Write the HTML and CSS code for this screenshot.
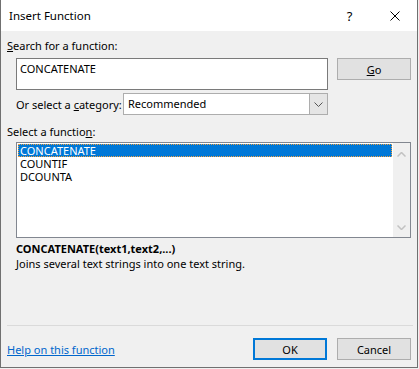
FILE: index.html
```html
<!DOCTYPE html>
<html>
    <head>
        <title>Insert Function</title>
        <link rel="stylesheet" href="styles.css">
    </head>
    <body>
        <div class="dialog">
            <div class="titlebar">
                <span class="title">Insert Function</span>
                <span class="caption-btn">?</span>
                <span class="caption-btn">
                    <svg width="10" height="10" viewBox="0 0 10 10"><path d="M0.5 0.5L9.5 9.5M9.5 0.5L0.5 9.5" stroke="#000" stroke-width="1"/></svg>
                </span>
            </div>
            <div class="content">
                <div class="label"><u>S</u>earch for a function:</div>
                <div class="search-row">
                    <div class="search-box">CONCATENATE</div>
                    <button class="btn"><u>G</u>o</button>
                </div>
                <div class="category-row">
                    <span class="category-label">Or select a <u>c</u>ategory:</span>
                    <div class="select">
                        <span class="select-value">Recommended</span>
                        <span class="select-arrow">
                            <svg width="9" height="5" viewBox="0 0 9 5"><path d="M0.5 0.5L4.5 4.5L8.5 0.5" fill="none" stroke="#555" stroke-width="1"/></svg>
                        </span>
                    </div>
                </div>
                <div class="label label-list">Select a functio<u>n</u>:</div>
                <div class="listbox">
                    <ul class="items">
                        <li class="selected">CONCATENATE</li>
                        <li>COUNTIF</li>
                        <li>DCOUNTA</li>
                    </ul>
                    <div class="scrollbar">
                        <svg width="9" height="5" viewBox="0 0 9 5"><path d="M0.5 4.5L4.5 0.5L8.5 4.5" fill="none" stroke="#c2c2c2" stroke-width="1.5"/></svg>
                        <svg width="9" height="5" viewBox="0 0 9 5"><path d="M0.5 0.5L4.5 4.5L8.5 0.5" fill="none" stroke="#c2c2c2" stroke-width="1.5"/></svg>
                    </div>
                </div>
                <div class="signature">CONCATENATE(text1,text2,...)</div>
                <div class="desc">Joins several text strings into one text string.</div>
                <div class="spacer"></div>
                <div class="separator"></div>
                <div class="footer">
                    <a href="#" class="help-link">Help on this function</a>
                    <div class="footer-buttons">
                        <button class="btn btn-default">OK</button>
                        <button class="btn">Cancel</button>
                    </div>
                </div>
            </div>
        </div>
    </body>
</html>
```

FILE: styles.css
```css
body {
    margin: 0;
    background: #f0f0f0;
    font-family: "Noto Sans", "Segoe UI", sans-serif;
    font-size: 11px;
    color: #000;
}

* {
    box-sizing: border-box;
}

.dialog {
    width: 418px;
    height: 368px;
    border: 1px solid #707070;
    border-top: none;
    background: #f0f0f0;
    display: flex;
    flex-direction: column;
}

.titlebar {
    flex: none;
    height: 31px;
    background: #fff;
    display: flex;
    align-items: center;
    padding-left: 8px;
}

.title {
    flex: 1;
    font-size: 11.5px;
}

.caption-btn {
    width: 45px;
    height: 31px;
    display: flex;
    align-items: center;
    justify-content: center;
    font-size: 13px;
}

.content {
    flex: 1;
    display: flex;
    flex-direction: column;
    padding: 0 6px 7px 6px;
}

.label {
    line-height: 15px;
    margin-top: 7px;
    white-space: nowrap;
}

.label-list {
    margin-top: 9px;
}

.search-row {
    display: flex;
    gap: 9px;
    margin: 5px 0 0 9px;
    align-items: flex-start;
}

.search-box {
    width: 312px;
    height: 32px;
    border: 1px solid #7a7a7a;
    background: #fff;
    padding: 2px 3px;
    line-height: 15px;
}

.btn {
    width: 74px;
    height: 22px;
    padding: 0;
    border: 1px solid #adadad;
    background: #e1e1e1;
    font: inherit;
    color: #000;
}

.btn-default {
    border: 2px solid #0078d7;
}

.category-row {
    width: 312px;
    margin: 3px 0 0 9px;
    display: flex;
    justify-content: space-between;
    align-items: center;
}

.category-label {
    white-space: nowrap;
}

.select {
    width: 205px;
    height: 22px;
    display: flex;
    border: 1px solid #adadad;
    background: #fff;
}

.select-value {
    flex: 1;
    padding-left: 4px;
    line-height: 20px;
}

.select-arrow {
    width: 18px;
    background: #e5e5e5;
    border-left: 1px solid #adadad;
    display: flex;
    align-items: center;
    justify-content: center;
}

.listbox {
    margin: 3px 0 0 9px;
    height: 96px;
    border: 1px solid #828790;
    background: #fff;
    display: flex;
}

.items {
    flex: 1;
    list-style: none;
    margin: 0;
    padding: 1px;
}

.items li {
    height: 13px;
    line-height: 13px;
    padding-left: 2px;
}

.items .selected {
    background: #0078d7;
    color: #fff;
    outline: 1px dotted #f0a040;
    outline-offset: -1px;
}

.scrollbar {
    width: 17px;
    background: #f0f0f0;
    display: flex;
    flex-direction: column;
    justify-content: space-between;
    align-items: center;
    padding: 9px 0 7px 0;
}

.signature {
    margin-top: 3px;
    margin-left: 9px;
    font-weight: bold;
    line-height: 15px;
}

.desc {
    margin-left: 9px;
    line-height: 15px;
}

.spacer {
    flex: 1;
}

.separator {
    height: 1px;
    background: #dadada;
    margin: 0 -2px 12px 0;
}

.footer {
    display: flex;
    align-items: center;
    justify-content: space-between;
}

.help-link {
    color: #0066cc;
    line-height: 15px;
}

.footer-buttons {
    display: flex;
    gap: 10px;
}
```
